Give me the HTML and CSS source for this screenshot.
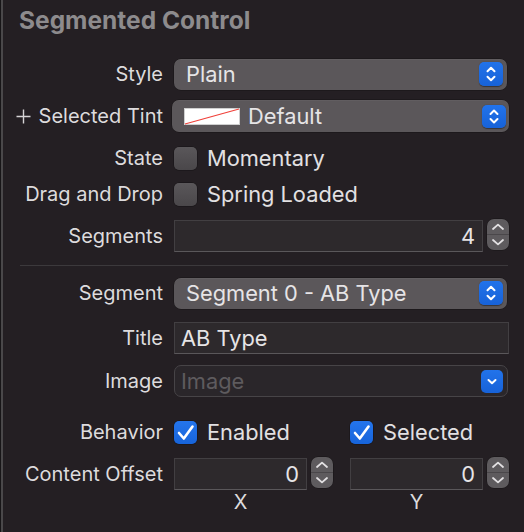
FILE: index.html
```html
<!DOCTYPE html>
<html>
<head>
<meta charset="utf-8">
<link rel="stylesheet" href="styles.css">
</head>
<body>
<div class="panel">
  <div class="heading">Segmented Control</div>

  <div class="row mt-style">
    <div class="label">Style</div>
    <div class="popup">
      <span class="pv">Plain</span>
      <span class="pbtn"><svg width="24" height="24" viewBox="0 0 24 24"><path d="M8.5 9.3 L12 5.8 L15.5 9.3 M8.5 14.7 L12 18.2 L15.5 14.7" fill="none" stroke="#fff" stroke-width="2" stroke-linecap="round" stroke-linejoin="round"/></svg></span>
    </div>
  </div>

  <div class="row mt-6">
    <div class="label label-tint"><svg class="plus" width="15" height="15" viewBox="0 0 15 15"><path d="M7.5 0.5 V14.5 M0.5 7.5 H14.5" stroke="#d6d4d6" stroke-width="1.4" fill="none"/></svg><span>Selected Tint</span></div>
    <div class="popup popup-tint">
      <svg class="swatch" width="56" height="17" viewBox="0 0 56 17"><rect x="0.5" y="0.5" width="55" height="16" fill="#fff" stroke="#cfcfcf"/><line x1="1" y1="16" x2="55" y2="1" stroke="#f0413a" stroke-width="1.2"/></svg>
      <span class="pv pv-tint">Default</span>
      <span class="pbtn pbtn-tint"><svg width="24" height="23" viewBox="0 0 24 23"><path d="M8.5 9 L12 5.5 L15.5 9 M8.5 14 L12 17.5 L15.5 14" fill="none" stroke="#fff" stroke-width="2" stroke-linecap="round" stroke-linejoin="round"/></svg></span>
    </div>
  </div>

  <div class="row mt-6">
    <div class="label">State</div>
    <div class="check-line"><span class="cb"></span><span class="cbt">Momentary</span></div>
  </div>

  <div class="row">
    <div class="label">Drag and Drop</div>
    <div class="check-line"><span class="cb"></span><span class="cbt">Spring Loaded</span></div>
  </div>

  <div class="row mt-6">
    <div class="label">Segments</div>
    <div class="num-group wide">
      <div class="field num">4</div>
      <span class="stepper"><svg width="22" height="31" viewBox="0 0 22 31"><line x1="0" y1="15.5" x2="22" y2="15.5" stroke="#4a474a" stroke-width="1"/><path d="M6 10 L11 5.6 L16 10 M6 21 L11 25.4 L16 21" fill="none" stroke="#e2e0e2" stroke-width="1.8" stroke-linecap="round" stroke-linejoin="round"/></svg></span>
    </div>
  </div>

  <div class="sep"></div>

  <div class="row mt-9">
    <div class="label">Segment</div>
    <div class="popup">
      <span class="pv">Segment 0 - AB Type</span>
      <span class="pbtn"><svg width="24" height="24" viewBox="0 0 24 24"><path d="M8.5 9.3 L12 5.8 L15.5 9.3 M8.5 14.7 L12 18.2 L15.5 14.7" fill="none" stroke="#fff" stroke-width="2" stroke-linecap="round" stroke-linejoin="round"/></svg></span>
    </div>
  </div>

  <div class="row mt-9">
    <div class="label">Title</div>
    <div class="field text">AB Type</div>
  </div>

  <div class="row mt-7">
    <div class="label">Image</div>
    <div class="combo">
      <span class="ph">Image</span>
      <span class="cbtn"><svg width="22" height="23" viewBox="0 0 22 23"><path d="M7.5 10 L11 13.3 L14.5 10" fill="none" stroke="#fff" stroke-width="2" stroke-linecap="round" stroke-linejoin="round"/></svg></span>
    </div>
  </div>

  <div class="row mt-15">
    <div class="label">Behavior</div>
    <div class="pair">
      <div class="check-line"><span class="cb on"><svg width="23" height="23" viewBox="0 0 23 23"><path d="M5 12 L9.8 17.5 L18.5 5.5" fill="none" stroke="#fff" stroke-width="2.6" stroke-linecap="round" stroke-linejoin="round"/></svg></span><span class="cbt">Enabled</span></div>
      <div class="check-line"><span class="cb on"><svg width="23" height="23" viewBox="0 0 23 23"><path d="M5 12 L9.8 17.5 L18.5 5.5" fill="none" stroke="#fff" stroke-width="2.6" stroke-linecap="round" stroke-linejoin="round"/></svg></span><span class="cbt">Selected</span></div>
    </div>
  </div>

  <div class="row mt-6">
    <div class="label">Content Offset</div>
    <div class="pair">
      <div class="num-group">
        <div class="field num">0</div>
        <span class="stepper"><svg width="22" height="31" viewBox="0 0 22 31"><line x1="0" y1="15.5" x2="22" y2="15.5" stroke="#4a474a" stroke-width="1"/><path d="M6 10 L11 5.6 L16 10 M6 21 L11 25.4 L16 21" fill="none" stroke="#e2e0e2" stroke-width="1.8" stroke-linecap="round" stroke-linejoin="round"/></svg></span>
      </div>
      <div class="num-group">
        <div class="field num">0</div>
        <span class="stepper"><svg width="22" height="31" viewBox="0 0 22 31"><line x1="0" y1="15.5" x2="22" y2="15.5" stroke="#4a474a" stroke-width="1"/><path d="M6 10 L11 5.6 L16 10 M6 21 L11 25.4 L16 21" fill="none" stroke="#e2e0e2" stroke-width="1.8" stroke-linecap="round" stroke-linejoin="round"/></svg></span>
      </div>
    </div>
  </div>

  <div class="row row-axis">
    <div class="label"></div>
    <div class="pair">
      <div class="axis">X</div>
      <div class="axis">Y</div>
    </div>
  </div>
</div>
</body>
</html>
```

FILE: styles.css
```css
html, body {
  margin: 0;
  padding: 0;
}
body {
  background: #241f23;
  min-height: 100vh;
  box-shadow: inset 1px 0 0 #171517, inset 3px 0 0 #4a484a;
  font-family: "Inter", "Noto Sans", sans-serif;
  font-size: 20px;
  color: #dddbdd;
}
.panel {
  display: flex;
  flex-direction: column;
  width: 524px;
}
.heading {
  margin: 5px 0 0 19px;
  height: 30px;
  line-height: 30px;
  font-size: 24.5px;
  font-weight: 700;
  color: #8d8b8d;
}
.row {
  display: grid;
  grid-template-columns: 163px 335px;
  column-gap: 11px;
  height: 36px;
  align-items: center;
}
.mt-style { margin-top: 21px; }
.mt-6 { margin-top: 6px; }
.mt-7 { margin-top: 7px; }
.mt-9 { margin-top: 9px; }
.mt-15 { margin-top: 15px; }
.label {
  text-align: right;
  white-space: nowrap;
  color: #dddbdd;
}
.label-tint {
  display: flex;
  align-items: center;
  justify-content: space-between;
  padding-left: 16px;
}
.plus {
  display: block;
  flex: none;
}
.popup {
  height: 31px;
  width: 333px;
  box-sizing: border-box;
  border-radius: 7px;
  background: #5b575a;
  box-shadow: 0 0 0 0.5px rgba(0,0,0,0.35), inset 0 0.5px 0 rgba(255,255,255,0.08);
  display: flex;
  align-items: center;
  padding-left: 12px;
  padding-right: 4px;
}
.popup-tint {
  margin-left: -2px;
  width: 337px;
  height: 32px;
  padding-right: 3px;
}
.pv {
  flex: 1;
  color: #e6e4e6;
  white-space: nowrap;
  font-size: 21.8px;
}
.pv-tint { margin-left: 8px; }
.swatch { display: block; flex: none; }
.pbtn {
  width: 24px;
  height: 24px;
  border-radius: 5px;
  background: linear-gradient(#2273ea, #1762d8);
  box-shadow: 0 0.5px 1px rgba(0,0,0,0.4);
  display: flex;
}
.pbtn-tint { height: 23px; }
.check-line {
  display: flex;
  align-items: center;
}
.cb {
  width: 23px;
  height: 23px;
  box-sizing: border-box;
  border-radius: 5px;
  background: linear-gradient(#5a575a, #4a474a);
  box-shadow: 0 0 0 0.5px rgba(0,0,0,0.4);
  display: flex;
  flex: none;
}
.cb.on {
  background: linear-gradient(#2475ec, #1764da);
}
.cbt {
  margin-left: 10px;
  color: #e2e0e2;
  white-space: nowrap;
  font-size: 21.8px;
}
.field {
  height: 32px;
  box-sizing: border-box;
  background: #2d292c;
  border: 1px solid #423f42;
  border-bottom-color: #5a575a;
  display: flex;
  align-items: center;
  color: #e6e4e6;
  font-size: 21.8px;
}
.field.text {
  width: 335px;
  padding-left: 6px;
}
.field.num {
  flex: 1;
  justify-content: flex-end;
  padding-right: 7px;
}
.num-group {
  display: flex;
  align-items: center;
  gap: 4px;
  width: 159px;
}
.num-group.wide { width: 335px; }
.stepper {
  width: 22px;
  height: 31px;
  border-radius: 7px;
  background: #5e5b5e;
  box-shadow: 0 0 0 0.5px rgba(0,0,0,0.35);
  display: flex;
  margin-top: -3px;
}
.sep {
  margin: 11px 0 0 20px;
  width: 488px;
  height: 1px;
  background: #3c393c;
}
.combo {
  width: 334px;
  height: 32px;
  box-sizing: border-box;
  border-radius: 7px;
  border: 1px solid #474447;
  background: #2a262a;
  display: flex;
  align-items: center;
  padding-left: 6px;
  padding-right: 4px;
}
.ph {
  flex: 1;
  color: #5e5b5e;
  font-size: 21.8px;
}
.cbtn {
  width: 22px;
  height: 23px;
  border-radius: 5px;
  background: linear-gradient(#2273ea, #1762d8);
  display: flex;
}
.pair {
  display: grid;
  grid-template-columns: 159px 159px;
  column-gap: 17px;
  align-items: center;
}
.row-axis {
  height: 20px;
}
.axis {
  width: 133px;
  text-align: center;
  font-size: 20px;
  color: #dddbdd;
  line-height: 20px;
}
```
